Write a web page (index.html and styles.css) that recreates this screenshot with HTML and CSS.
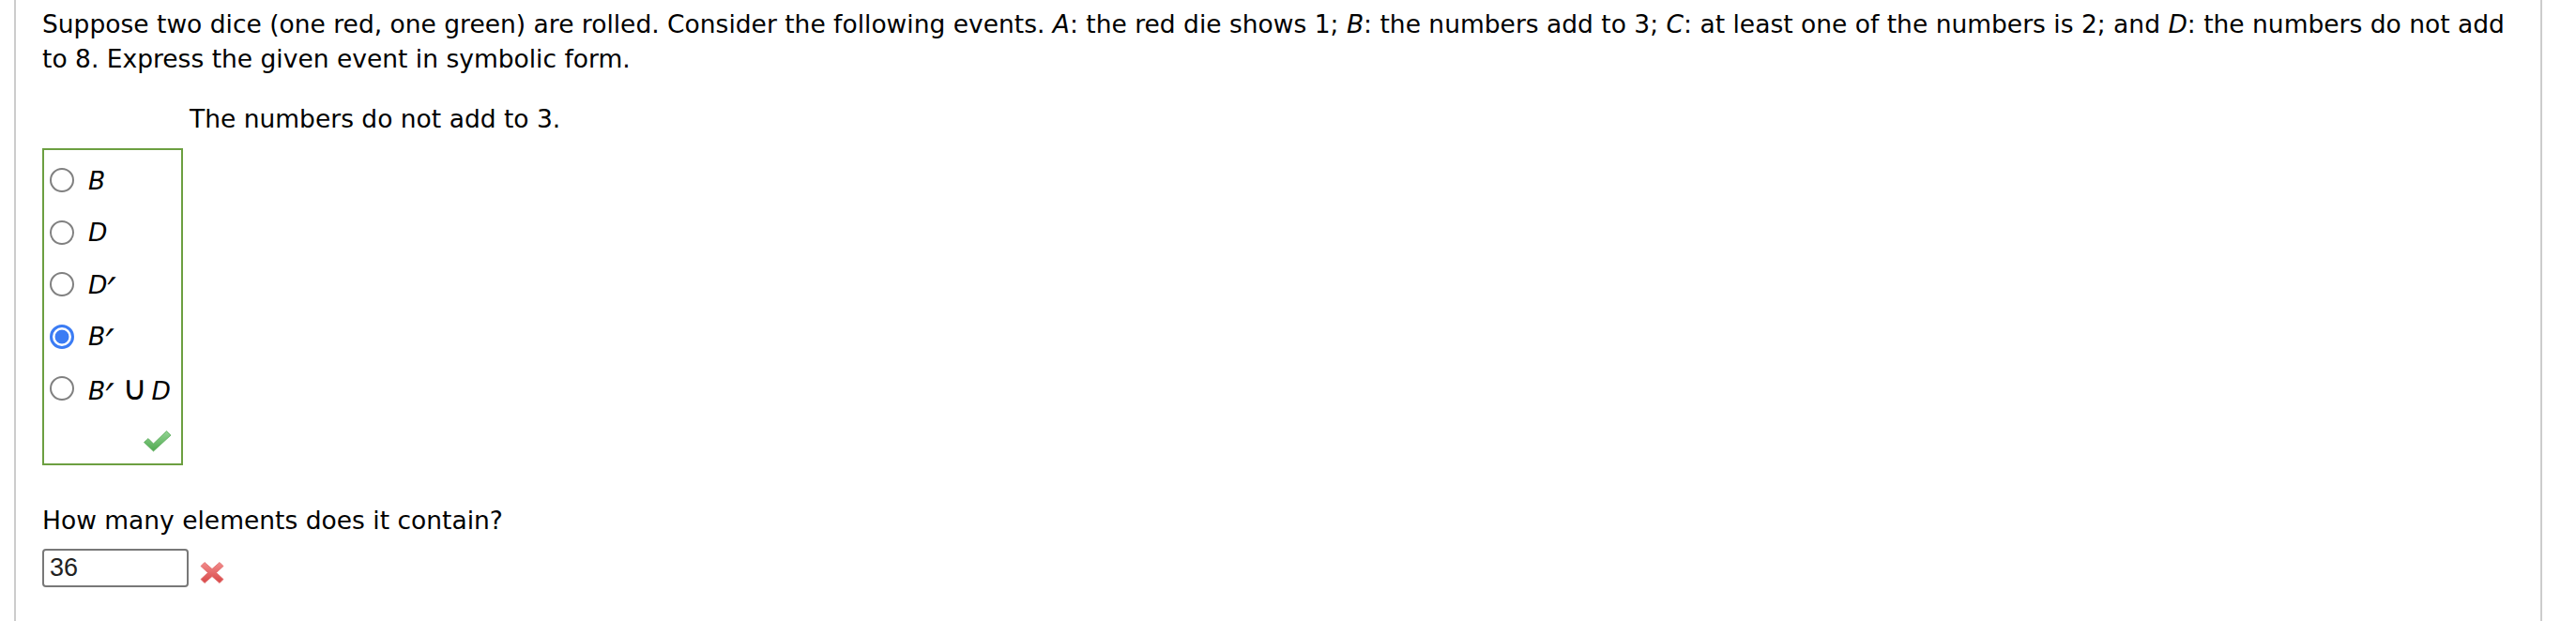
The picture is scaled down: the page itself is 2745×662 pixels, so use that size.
FILE: index.html
```html
<!DOCTYPE html>
<html>
<head>
<meta charset="utf-8">
<link rel="stylesheet" href="styles.css">
</head>
<body>
<div class="page">
  <p class="stem"><span class="ln">Suppose two dice (one red, one green) are rolled. Consider the following events. <i>A</i>: the red die shows 1; <i>B</i>: the numbers add to 3; <i>C</i>: at least one of the numbers is 2; and <i>D</i>: the numbers do not add</span><span class="ln">to 8. Express the given event in symbolic form.</span></p>
  <p class="prompt">The numbers do not add to 3.</p>
  <div class="choices">
    <label class="opt"><span class="radio"></span><span class="lbl">B</span></label>
    <label class="opt"><span class="radio"></span><span class="lbl">D</span></label>
    <label class="opt"><span class="radio"></span><span class="lbl">D<span class="pr">&prime;</span></span></label>
    <label class="opt"><span class="radio on"></span><span class="lbl">B<span class="pr">&prime;</span></span></label>
    <label class="opt"><span class="radio"></span><span class="lbl">B<span class="pr">&prime;</span><span class="cup">&cup;</span>D</span></label>
    <div class="mark">
      <svg width="31" height="24" viewBox="0 0 31 24">
        <defs>
          <linearGradient id="g" x1="0" y1="0" x2="0" y2="1">
            <stop offset="0" stop-color="#93d493"/>
            <stop offset="1" stop-color="#4fa94f"/>
          </linearGradient>
        </defs>
        <path d="M1.5 13.5 L6 9.5 L11.5 15 L25.5 1.5 L30 6 L11.5 23 Z" fill="url(#g)" stroke="#5cab5c" stroke-width="0.8" stroke-linejoin="round"/>
      </svg>
    </div>
  </div>
  <p class="q">How many elements does it contain?</p>
  <div class="answer">
    <span class="input">36</span>
    <svg class="x" width="28" height="25" viewBox="0 0 28 25">
      <defs>
        <linearGradient id="r" x1="0" y1="0" x2="0" y2="1">
          <stop offset="0" stop-color="#f28b8b"/>
          <stop offset="1" stop-color="#d84848"/>
        </linearGradient>
      </defs>
      <path d="M2 5.5 L6 1.5 L14 8.5 L22 1.5 L26 5.5 L18.5 12.5 L26 19.5 L22 23.5 L14 16.5 L6 23.5 L2 19.5 L9.5 12.5 Z" fill="url(#r)" stroke="#e06a6a" stroke-width="0.8" stroke-linejoin="round"/>
    </svg>
  </div>
</div>
</body>
</html>
```
FILE: styles.css
```css
html, body {
  margin: 0;
  padding: 0;
  background: #fff;
}
body {
  font-family: Verdana, "DejaVu Sans", sans-serif;
  font-size: 26.5px;
  color: #000;
}
.page {
  margin-left: 15px;
  width: 2694px;
  height: 662px;
  box-sizing: border-box;
  border-left: 2px solid #cccccc;
  border-right: 2px solid #cccccc;
  padding: 7px 0 0 28px;
}
.stem {
  margin: 0;
  line-height: 37px;
}
.ln {
  display: block;
  white-space: nowrap;
}
.prompt {
  margin: 28px 0 0 157px;
  line-height: 35px;
}
.choices {
  margin-top: 13.5px;
  width: 150px;
  height: 338px;
  box-sizing: border-box;
  border: 2px solid #6c9f41;
  padding-top: 5px;
  display: flex;
  flex-direction: column;
}
.opt {
  height: 55.5px;
  display: flex;
  align-items: center;
  padding-left: 6px;
  flex: none;
}
.radio {
  width: 26px;
  height: 26px;
  box-sizing: border-box;
  border: 2px solid #808080;
  border-radius: 50%;
  flex: none;
}
.radio.on {
  border: 3px solid #3b7cf4;
  background: radial-gradient(circle, #3b7cf4 0 7px, #fff 7.8px);
}
.lbl {
  margin-left: 15px;
  font-style: italic;
  white-space: nowrap;
  display: flex;
  align-items: baseline;
}
.pr {
  display: inline-block;
  font-style: normal;
  transform: skewX(-12deg) scale(1.5, 1.7);
  transform-origin: 50% 10%;
  margin-left: 4px;
  margin-right: 3px;
}
.cup {
  font-style: normal;
  font-size: 36px;
  line-height: 1;
  margin: 0 5px 0 5px;
}
.mark {
  margin-top: 16px;
  display: flex;
  justify-content: flex-end;
  padding-right: 10px;
}
.q {
  margin: 41px 0 0 0;
  line-height: 35px;
}
.answer {
  margin-top: 13px;
  display: flex;
  align-items: center;
}
.input {
  width: 156px;
  height: 41px;
  box-sizing: border-box;
  border: 2px solid #787878;
  border-radius: 4px;
  font-family: "Liberation Sans", Arial, sans-serif;
  font-size: 27px;
  color: #222;
  padding-left: 6px;
  display: flex;
  align-items: center;
}
.x {
  margin-left: 11px;
  margin-top: 10px;
}
```
